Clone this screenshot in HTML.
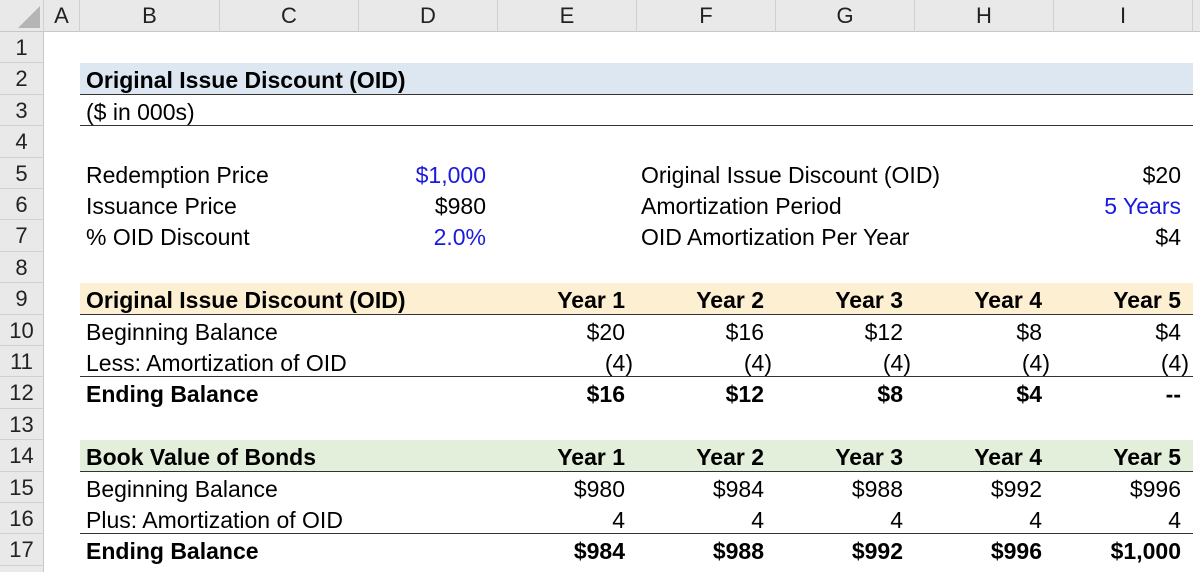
<!DOCTYPE html>
<html><head><meta charset="utf-8"><style>
*{margin:0;padding:0;box-sizing:border-box}
html,body{width:1200px;height:572px;overflow:hidden}
body{background:#fff;font-family:"Liberation Sans",Arial,sans-serif;font-size:23px;color:#000;position:relative}
.hdr{position:absolute;top:0;left:0;width:1200px;height:32px;background:#e9e9e9;border-bottom:1px solid #c8c8c8}
.ch{position:absolute;top:0;height:32px;line-height:32px;text-align:center;border-right:1px solid #d0d0d0;color:#222;font-size:22px}
.rn{position:absolute;left:0;width:44px;height:31.4px;line-height:31px;text-align:center;background:#e9e9e9;border-bottom:1px solid #d0d0d0;border-right:1px solid #c8c8c8;color:#222;font-size:22px}
.row{position:absolute;left:80px;width:1113px;height:31.4px}
.t{position:absolute;top:2px;line-height:31px;white-space:nowrap}
.b{font-weight:bold}
.bl{color:#1a1adf}
.bb{border-bottom:1.5px solid #333}
</style></head><body>
<div class="hdr"></div>
<div class="ch" style="left:0;width:44px"><svg width="44" height="32" style="position:absolute;left:0;top:0"><polygon points="40,6 40,28 18,28" fill="#b5b5b5"/></svg></div>
<div class="ch" style="left:44px;width:36px">A</div>
<div class="ch" style="left:80px;width:140px">B</div>
<div class="ch" style="left:220px;width:139px">C</div>
<div class="ch" style="left:359px;width:139px">D</div>
<div class="ch" style="left:498px;width:139px">E</div>
<div class="ch" style="left:637px;width:139px">F</div>
<div class="ch" style="left:776px;width:139px">G</div>
<div class="ch" style="left:915px;width:139px">H</div>
<div class="ch" style="left:1054px;width:139px">I</div>

<div class="rn" style="top:32px">1</div>
<div class="rn" style="top:63.4px">2</div>
<div class="rn" style="top:94.8px">3</div>
<div class="rn" style="top:126.2px">4</div>
<div class="rn" style="top:157.6px">5</div>
<div class="rn" style="top:189px">6</div>
<div class="rn" style="top:220.4px">7</div>
<div class="rn" style="top:251.8px">8</div>
<div class="rn" style="top:283.2px">9</div>
<div class="rn" style="top:314.6px">10</div>
<div class="rn" style="top:346px">11</div>
<div class="rn" style="top:377.4px">12</div>
<div class="rn" style="top:408.8px">13</div>
<div class="rn" style="top:440.2px">14</div>
<div class="rn" style="top:471.6px">15</div>
<div class="rn" style="top:503px">16</div>
<div class="rn" style="top:534.4px">17</div>
<div class="rn" style="top:565.8px"></div>

<div class="row bb" style="top:63.4px;background:#dde7f2"><span class="t b" style="left:6px">Original Issue Discount (OID)</span></div>
<div class="row bb" style="top:94.8px;border-bottom-width:1px"><span class="t" style="left:6px">($ in 000s)</span></div>

<div class="row" style="top:157.6px"><span class="t" style="left:6px">Redemption Price</span><span class="t bl" style="right:707px">$1,000</span><span class="t" style="left:561px">Original Issue Discount (OID)</span><span class="t" style="right:12px">$20</span></div>
<div class="row" style="top:189px"><span class="t" style="left:6px">Issuance Price</span><span class="t" style="right:707px">$980</span><span class="t" style="left:561px">Amortization Period</span><span class="t bl" style="right:12px">5 Years</span></div>
<div class="row" style="top:220.4px"><span class="t" style="left:6px">% OID Discount</span><span class="t bl" style="right:707px">2.0%</span><span class="t" style="left:561px">OID Amortization Per Year</span><span class="t" style="right:12px">$4</span></div>

<div class="row bb" style="top:283.2px;background:#fdf0d2;border-bottom-width:1px"><span class="t b" style="left:6px">Original Issue Discount (OID)</span>
<span class="t b" style="right:568px">Year 1</span><span class="t b" style="right:429px">Year 2</span><span class="t b" style="right:290px">Year 3</span><span class="t b" style="right:151px">Year 4</span><span class="t b" style="right:12px">Year 5</span></div>
<div class="row" style="top:314.6px"><span class="t" style="left:6px">Beginning Balance</span>
<span class="t" style="right:568px">$20</span><span class="t" style="right:429px">$16</span><span class="t" style="right:290px">$12</span><span class="t" style="right:151px">$8</span><span class="t" style="right:12px">$4</span></div>
<div class="row bb" style="top:346px;border-bottom-width:1px"><span class="t" style="left:6px">Less: Amortization of OID</span>
<span class="t" style="right:560px">(4)</span><span class="t" style="right:421px">(4)</span><span class="t" style="right:282px">(4)</span><span class="t" style="right:143px">(4)</span><span class="t" style="right:4px">(4)</span></div>
<div class="row" style="top:377.4px"><span class="t b" style="left:6px">Ending Balance</span>
<span class="t b" style="right:568px">$16</span><span class="t b" style="right:429px">$12</span><span class="t b" style="right:290px">$8</span><span class="t b" style="right:151px">$4</span><span class="t b" style="right:12px">--</span></div>

<div class="row bb" style="top:440.2px;background:#e3efdb;border-bottom-width:1px"><span class="t b" style="left:6px">Book Value of Bonds</span>
<span class="t b" style="right:568px">Year 1</span><span class="t b" style="right:429px">Year 2</span><span class="t b" style="right:290px">Year 3</span><span class="t b" style="right:151px">Year 4</span><span class="t b" style="right:12px">Year 5</span></div>
<div class="row" style="top:471.6px"><span class="t" style="left:6px">Beginning Balance</span>
<span class="t" style="right:568px">$980</span><span class="t" style="right:429px">$984</span><span class="t" style="right:290px">$988</span><span class="t" style="right:151px">$992</span><span class="t" style="right:12px">$996</span></div>
<div class="row bb" style="top:503px;border-bottom-width:1px"><span class="t" style="left:6px">Plus: Amortization of OID</span>
<span class="t" style="right:568px">4</span><span class="t" style="right:429px">4</span><span class="t" style="right:290px">4</span><span class="t" style="right:151px">4</span><span class="t" style="right:12px">4</span></div>
<div class="row" style="top:534.4px"><span class="t b" style="left:6px">Ending Balance</span>
<span class="t b" style="right:568px">$984</span><span class="t b" style="right:429px">$988</span><span class="t b" style="right:290px">$992</span><span class="t b" style="right:151px">$996</span><span class="t b" style="right:12px">$1,000</span></div>
</body></html>
